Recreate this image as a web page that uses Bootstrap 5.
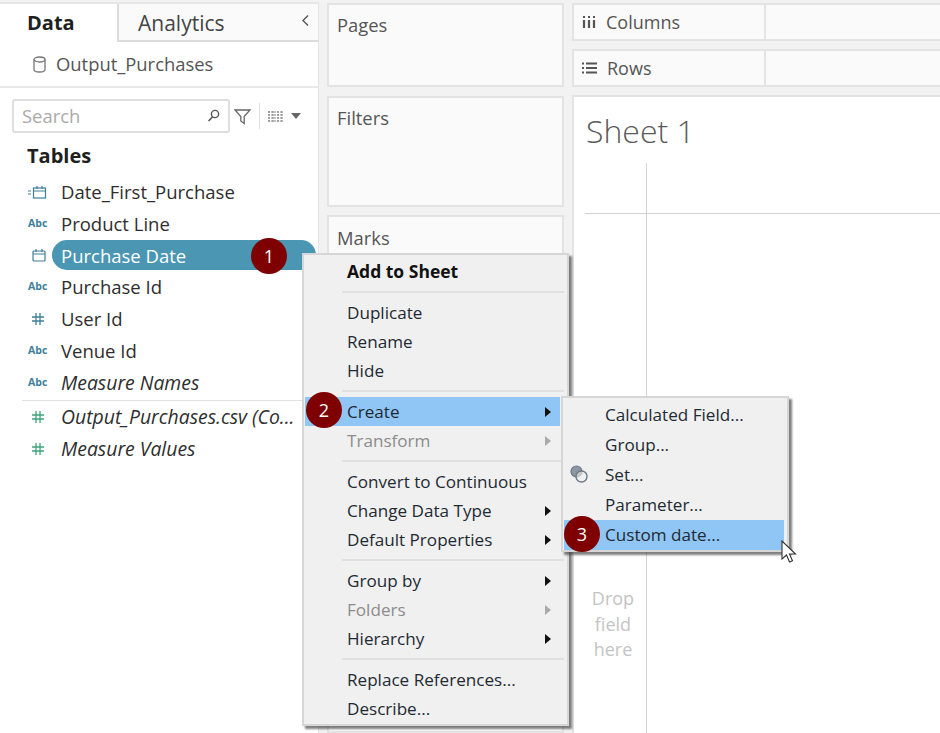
<!DOCTYPE html>
<html lang="en">
<head>
<meta charset="utf-8">
<title>Sheet 1</title>
<link rel="stylesheet" href="https://cdn.jsdelivr.net/npm/bootstrap@5.3.0/dist/css/bootstrap.min.css">
<style>
html,body{height:733px;overflow:hidden}
body{background:#f2f2f2;font-family:"Open Sans","Noto Sans",sans-serif;font-size:17px;color:#333;position:relative}
.stage{width:940px;height:733px}
.pane-left{width:319px;flex:none;background:#fff;border-right:1px solid #e4e4e4;border-top:2px solid #e6e6e6;margin-top:2px}
.tab-row{height:38px}
.tab-on{width:119px;font-weight:700;font-size:20px;color:#1f1f1f;padding:0 0 0 27px;border-right:2px solid #dcdcdc;line-height:38px}
.tab-off{flex:1;background:#fafafa;border-bottom:2px solid #dcdcdc;font-size:21px;color:#444;padding-left:19px;line-height:38px;position:relative}
.tab-chev{position:absolute;right:8px;top:10px}
.source{height:46px;border-bottom:2px solid #e8e8e8;padding-left:32px;gap:9px;color:#555;font-size:18.4px}
.tools{padding:11px 0 0 12px;height:53px}
.searchbox{width:218px;height:34px;border:2px solid #dedede;border-radius:3px;padding:0 8px;color:#aaa;font-size:18.4px}
.toolset{height:34px}
.vsep{width:1px;height:26px;background:#ddd}
.tables-h{font-weight:700;font-size:20px;color:#1f1f1f;padding-left:27px;height:29px;line-height:29px}
.flist{padding:6px 0 0}
.frow{height:31.8px;padding-left:28px;font-size:18.5px;color:#2e2e2e}
.ficon{width:33px;flex:none;color:#3e7e9a;font-size:10.5px;font-weight:700}
.frow-i{font-style:italic;font-size:19.4px}
.frow-sep{height:1px;background:#e2e2e2;margin:1px 0 0 22px;width:280px}
.pillname{background:#4a96b3;color:#fff;height:30px;width:264px;border-radius:15px;padding-left:9px;margin-left:-9px}
.pane-mid{width:237px;flex:none;margin:3px 8px 0 8px;gap:9px}
.shelf{background:#fafafa;border:2px solid #e3e3e3;color:#555;padding:8px 8px;font-size:18.4px;line-height:24px}
.shelf-pages{height:84px}
.shelf-filters{height:111px}
.shelf-marks{flex:1;margin-top:-1px;padding-top:9px}
.pane-right{flex:1;margin-top:3px;min-width:0;gap:8px}
.hshelf{height:38px;background:#fafafa;border:2px solid #e3e3e3;border-right:0;color:#555;font-size:18px}
.hshelf-lab{width:192px;height:100%;border-right:2px solid #e3e3e3;padding-left:8px;gap:10px}
.sheet{flex:1;background:#fff;border:2px solid #e3e3e3;border-right:0;border-bottom:0;position:relative}
.sheet-title{font-size:32px;font-weight:300;color:#5a5a5a;padding:13px 0 0 12px;line-height:42px;height:66px}
.grid-v{position:absolute;left:72px;top:66px;bottom:0;width:1px;background:#d2d2d2}
.grid-h{position:absolute;left:11px;right:0;top:116px;height:1px;background:#d2d2d2}
.dropnote{position:absolute;left:9px;top:489px;width:60px;text-align:center;color:#c4c4c4;font-size:18px;line-height:25.7px}
.menu-x.dropdown-menu{position:absolute;display:block;background:#f0f0f0;border:2px solid #d6d6d6;border-radius:0;box-shadow:3px 3px 2px rgba(60,60,60,.65);padding:0;margin:0;min-width:0;font-size:17.1px;color:#1f2a33}
.menu-main{left:302px;top:253px;width:267px;height:473px;padding-top:2px!important}
.menu-sub{left:561px;top:396px;width:228px;height:156px;padding-top:2px!important}
.menu-x .dropdown-item{height:29px;padding:0 0 0 42px;display:flex;align-items:center;justify-content:space-between;color:#1f2a33;width:255px;margin-left:1px;white-space:nowrap}
.menu-x .dropdown-item:hover{background:transparent}
.menu-x .dropdown-item.is-hl,.menu-x .dropdown-item.is-hl:hover{background:#90c6f5}
.menu-x .dropdown-item.disabled{color:#8c8c8c}
.menu-x .dropdown-item.bolded{font-weight:700;font-size:17.5px;color:#111}
.menu-x .dropdown-divider{margin:5px 0 5px 38px;width:222px;border-top:2px solid #e0e0e0;opacity:1}
.menu-sub .dropdown-item{height:30px;width:220px;padding-left:41px;margin-left:1px;position:relative}
.arrow-r{width:0;height:0;border-left:6px solid #111;border-top:5px solid transparent;border-bottom:5px solid transparent;margin-right:9px;flex:none}
.arrow-g{border-left-color:#aaa}
.step{position:absolute;width:36px;height:36px;border-radius:50%;background:#7e0000;color:#fff;font-size:18px;display:flex;align-items:center;justify-content:center;z-index:1100}
.step-a{left:251px;top:238px}
.step-b{left:306px;top:392px}
.step-c{left:564px;top:516px}
.setico{position:absolute;left:6px;top:5px}
.pointer{position:absolute;left:781px;top:540px;z-index:1200}
</style>
</head>
<body>
<div class="stage d-flex">
  <div class="pane-left d-flex flex-column">
    <div class="tab-row d-flex">
      <div class="tab-on">Data</div>
      <div class="tab-off">Analytics
        <svg class="tab-chev" width="9" height="13" viewBox="0 0 9 13"><path d="M7 1.500 2 6.500l5 5" fill="none" stroke="#555" stroke-width="1.400"/></svg>
      </div>
    </div>
    <div class="source d-flex align-items-center">
      <svg width="15" height="17" viewBox="0 0 15 17"><ellipse cx="7.500" cy="3.500" rx="5.500" ry="2.500" fill="none" stroke="#777" stroke-width="1.300"/><path d="M2 3.500v10c0 1.400 2.500 2.500 5.500 2.500s5.500-1.100 5.500-2.500v-10" fill="none" stroke="#777" stroke-width="1.300"/></svg>
      <span>Output_Purchases</span>
    </div>
    <div class="tools d-flex align-items-start gap-1">
      <div class="searchbox d-flex align-items-center justify-content-between">
        <span>Search</span>
        <svg width="13" height="14" viewBox="0 0 13 14"><circle cx="8" cy="5" r="3.600" fill="none" stroke="#555" stroke-width="1.400"/><path d="M5.500 8 1.500 12" stroke="#555" stroke-width="1.600"/></svg>
      </div>
      <div class="toolset d-flex align-items-center gap-2">
        <svg width="17" height="17" viewBox="0 0 17 17"><path d="M1 2h15l-5.800 6.500v7l-3.400-2.500V8.500z" fill="none" stroke="#666" stroke-width="1.300"/></svg>
        <span class="vsep"></span>
        <svg width="15" height="11" viewBox="0 0 15 11"><path d="M0 1h15M0 4h15M0 7h15M0 10h15M1 0v11M5 0v11M10 0v11M14 0v11" stroke="#888" stroke-width="1.200" stroke-dasharray="2 1"/></svg>
        <svg width="10" height="6" viewBox="0 0 10 6"><path d="M0 0h10L5 6z" fill="#666"/></svg>
      </div>
    </div>
    <div class="tables-h">Tables</div>
    <div class="flist">
      <div class="frow d-flex align-items-center"><span class="ficon"><svg width="19" height="13" viewBox="0 0 19 13"><path d="M0 5h3M0 8h3" stroke="#3e7e9a" stroke-width="1.200"/><rect x="5.500" y="2" width="12" height="10" fill="none" stroke="#3e7e9a" stroke-width="1.200"/><path d="M5.500 5h12M9 0v3M14 0v3" stroke="#3e7e9a" stroke-width="1.200"/></svg></span><span>Date_First_Purchase</span></div>
      <div class="frow d-flex align-items-center"><span class="ficon">Abc</span><span>Product Line</span></div>
      <div class="frow d-flex align-items-center"><span class="ficon ps-1"><svg width="14" height="13" viewBox="0 0 14 13"><rect x="1" y="2" width="12" height="10" rx="1" fill="none" stroke="#3e7e9a" stroke-width="1.200"/><path d="M1 5h12M4 0v3M10 0v3" stroke="#3e7e9a" stroke-width="1.200"/></svg></span><span class="pillname d-flex align-items-center">Purchase Date</span></div>
      <div class="frow d-flex align-items-center"><span class="ficon">Abc</span><span>Purchase Id</span></div>
      <div class="frow d-flex align-items-center"><span class="ficon ps-1"><svg width="12" height="12" viewBox="0 0 12 12"><path d="M0 4h12M0 8h12M4 0v12M8 0v12" stroke="#3e7e9a" stroke-width="1.300"/></svg></span><span>User Id</span></div>
      <div class="frow d-flex align-items-center"><span class="ficon">Abc</span><span>Venue Id</span></div>
      <div class="frow frow-i d-flex align-items-center"><span class="ficon fst-normal">Abc</span><span>Measure Names</span></div>
      <div class="frow-sep"></div>
      <div class="frow frow-i d-flex align-items-center"><span class="ficon ps-1"><svg width="12" height="12" viewBox="0 0 12 12"><path d="M0 4h12M0 8h12M4 0v12M8 0v12" stroke="#3fa27c" stroke-width="1.300"/></svg></span><span>Output_Purchases.csv (Co...</span></div>
      <div class="frow frow-i d-flex align-items-center"><span class="ficon ps-1"><svg width="12" height="12" viewBox="0 0 12 12"><path d="M0 4h12M0 8h12M4 0v12M8 0v12" stroke="#3fa27c" stroke-width="1.300"/></svg></span><span>Measure Values</span></div>
    </div>
  </div>
  <div class="pane-mid d-flex flex-column">
    <div class="shelf shelf-pages">Pages</div>
    <div class="shelf shelf-filters">Filters</div>
    <div class="shelf shelf-marks">Marks</div>
  </div>
  <div class="pane-right d-flex flex-column">
    <div class="hshelf d-flex align-items-center">
      <div class="hshelf-lab d-flex align-items-center"><svg width="14" height="14" viewBox="0 0 14 14"><path d="M2 5v8M7 5v8M12 5v8" stroke="#555" stroke-width="2.200"/><path d="M2 1v2M7 1v2M12 1v2" stroke="#555" stroke-width="2"/></svg><span>Columns</span></div>
    </div>
    <div class="hshelf d-flex align-items-center">
      <div class="hshelf-lab d-flex align-items-center"><svg width="15" height="12" viewBox="0 0 15 12"><path d="M0 1.500h2M4 1.500h11M0 6h2M4 6h11M0 10.500h2M4 10.500h11" stroke="#555" stroke-width="2"/></svg><span>Rows</span></div>
    </div>
    <div class="sheet">
      <div class="sheet-title">Sheet 1</div>
      <div class="grid-v"></div>
      <div class="grid-h"></div>
      <div class="dropnote">Drop<br>field<br>here</div>
    </div>
  </div>
</div>

<div class="dropdown-menu menu-x menu-main">
  <div class="dropdown-item bolded">Add to Sheet</div>
  <div class="dropdown-divider"></div>
  <div class="dropdown-item">Duplicate</div>
  <div class="dropdown-item">Rename</div>
  <div class="dropdown-item">Hide</div>
  <div class="dropdown-divider"></div>
  <div class="dropdown-item is-hl">Create<span class="arrow-r"></span></div>
  <div class="dropdown-item disabled">Transform<span class="arrow-r arrow-g"></span></div>
  <div class="dropdown-divider"></div>
  <div class="dropdown-item">Convert to Continuous</div>
  <div class="dropdown-item">Change Data Type<span class="arrow-r"></span></div>
  <div class="dropdown-item">Default Properties<span class="arrow-r"></span></div>
  <div class="dropdown-divider"></div>
  <div class="dropdown-item">Group by<span class="arrow-r"></span></div>
  <div class="dropdown-item disabled">Folders<span class="arrow-r arrow-g"></span></div>
  <div class="dropdown-item">Hierarchy<span class="arrow-r"></span></div>
  <div class="dropdown-divider"></div>
  <div class="dropdown-item">Replace References...</div>
  <div class="dropdown-item">Describe...</div>
</div>
<div class="dropdown-menu menu-x menu-sub">
  <div class="dropdown-item">Calculated Field...</div>
  <div class="dropdown-item">Group...</div>
  <div class="dropdown-item"><svg class="setico" width="18" height="18" viewBox="0 0 18 18"><circle cx="6.500" cy="6.500" r="5.500" fill="#8d97a3" stroke="#6d7885" stroke-width="1.200"/><circle cx="11.500" cy="11.500" r="5.500" fill="#f0f0f0" fill-opacity=".6" stroke="#6d7885" stroke-width="1.400"/></svg>Set...</div>
  <div class="dropdown-item">Parameter...</div>
  <div class="dropdown-item is-hl">Custom date...</div>
</div>
<div class="step step-a">1</div>
<div class="step step-b">2</div>
<div class="step step-c">3</div>
<svg class="pointer" width="16" height="25" viewBox="0 0 16 25"><path d="M1 1v18l4.500-4 3 7 3-1.300-3-6.700h6z" fill="#fff" stroke="#333" stroke-width="1.100"/></svg>
<script src="https://cdn.jsdelivr.net/npm/bootstrap@5.3.0/dist/js/bootstrap.bundle.min.js"></script>
</body>
</html>
